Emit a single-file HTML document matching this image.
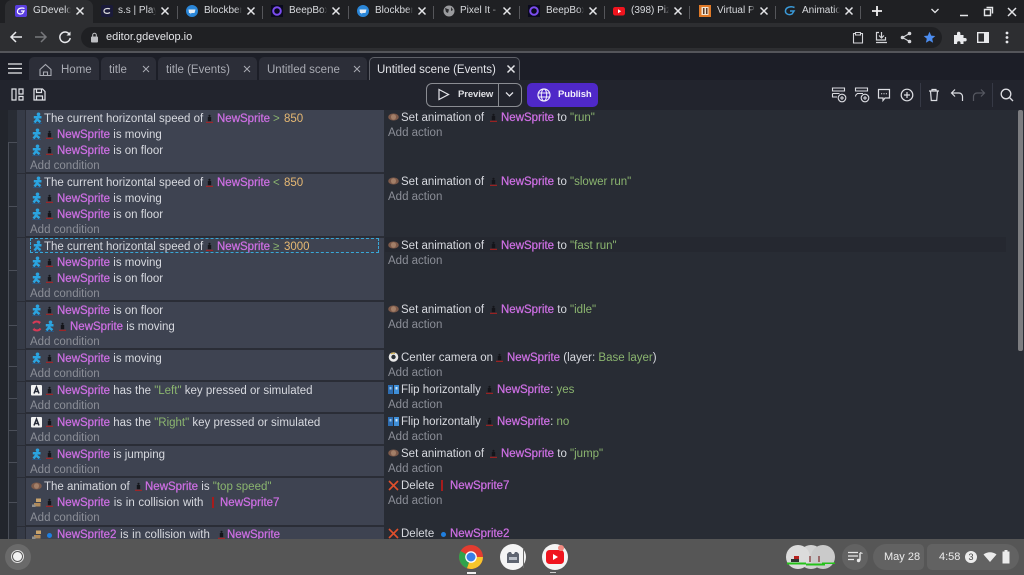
<!DOCTYPE html>
<html><head><meta charset="utf-8"><title>GDevelop</title>
<style>
html,body{margin:0;padding:0;width:1024px;height:575px;overflow:hidden;background:#282c34;font-family:"Liberation Sans",sans-serif}
div,svg{position:absolute}
.t{white-space:nowrap;font-size:11.5px;line-height:16px;color:#d7d9df;transform:translateY(1px)}
.n{color:#cd6fe3;-webkit-text-stroke:.25px #cd6fe3}
.g{color:#8bb56f}.o{color:#e6b873}
.a{color:#8b8e97}
.c{left:26px;width:358px;background:#3e4351}
.h{left:17px;width:8px;background:#363b47}
.tl{left:8px;width:9px;height:1px;background:#4a4e58}
.tab{top:0;height:22px;line-height:21px;font-size:10px;color:#d8dade;width:38px;overflow:hidden;white-space:nowrap;-webkit-mask-image:linear-gradient(90deg,#000 85%,transparent)}
.x{top:6px;width:10px;height:10px}
.sp{top:6px;width:1px;height:13px;background:#55565a}
.fv{top:5px;width:12px;height:12px}
.ap{top:57px;height:23px;background:#2c2e38;border-radius:5px 5px 0 0;line-height:26px;font-size:11.5px;color:#a9abb3;white-space:nowrap}
.ap span{position:absolute}
.i{width:11px;height:12px}
</style></head><body>
<svg width="0" height="0" style="left:0;top:0"><defs>
<g id="x"><path d="M1.500 1.500l7 7M8.500 1.500l-7 7" stroke="#e4e5e8" stroke-width="1.500" fill="none"/></g>
<g id="xa"><path d="M2 2l6 6M8 2l-6 6" stroke="#a9abb3" stroke-width="1" fill="none"/></g>
<g id="r"><circle cx="6.500" cy="2.300" r="1.800" fill="#2ba4e0"/><path d="M1.800 5.300h7.700M6 4.500L5 7.300l3.500 2.800M5 7.300L2.500 10.500" stroke="#2ba4e0" stroke-width="2.500" fill="none"/><path d="M1 11.500h9" stroke="#1d5fa0" stroke-width=".6"/></g>
<g id="s"><circle cx="5.500" cy="3.800" r="1.100" fill="#14151a"/><path d="M3.800 5h3.400v4.200H3.800z" fill="#14151a"/><path d="M2 10.300h7" stroke="#b5201e" stroke-width="1"/></g>
<g id="b"><ellipse cx="5.500" cy="6" rx="5.300" ry="3.500" fill="#7d5a4a"/><ellipse cx="5.500" cy="6" rx="2.500" ry="2.800" fill="#a37f68"/></g>
<g id="k"><rect x="0" y="1" width="11" height="10.500" rx="1" fill="#f2f2f2"/><path d="M3 9.500L5.500 3 8 9.500M3.800 7.500h3.400" stroke="#262a38" stroke-width="1.500" fill="none"/></g>
<g id="f"><rect x="0" y="2" width="5" height="9" fill="#2d6cb0"/><rect x="6" y="2" width="5" height="9" fill="#3f8fd8"/><rect x="1.500" y="4" width="2" height="2.500" fill="#8fc4ee"/><rect x="7.500" y="4" width="2" height="2.500" fill="#cde4f7"/></g>
<g id="cm"><path d="M3 7h6.500v3.500H3z" fill="#b08a5a"/><path d="M1 8.500h3.500V11H1z" fill="#8f8f8f"/><path d="M5 2.500h5V6H5z" fill="#c9a36c"/></g>
<g id="d"><path d="M1 2l9 9M10 2l-9 9" stroke="#e0502c" stroke-width="1.600" fill="none"/></g>
</defs></svg>

<!-- browser tab strip -->
<div style="left:0;top:0;width:1024px;height:23px;background:#1f2023"></div>
<div style="left:5px;top:0;width:88px;height:23px;background:#2d2e31;border-radius:7px 7px 0 0"></div>
<svg class="fv" style="left:15px" viewBox="0 0 12 12"><rect width="12" height="12" rx="2" fill="#5a3ee0"/><path d="M9.500 3.500C7 2.500 3 3 2.500 6s3 3.500 5 2.500L9 6H6" stroke="#fff" stroke-width="1.200" fill="none"/></svg>
<div class="tab" style="left:33px">GDevelop 5</div><svg class="x" style="left:75px" viewBox="0 0 10 10"><use href="#x"/></svg>
<svg class="fv" style="left:101px" viewBox="0 0 12 12"><rect width="12" height="12" rx="2" fill="#1a1a3a"/><path d="M9 4C7 3 3 3.500 3 6s4 3 6 1.500" stroke="#ddd" stroke-width="1.200" fill="none"/></svg>
<div class="tab" style="left:118px">s.s | Play this</div><svg class="x" style="left:160px" viewBox="0 0 10 10"><use href="#x"/></svg><div class="sp" style="left:177px"></div>
<svg class="fv" style="left:186px" viewBox="0 0 12 12"><circle cx="6" cy="6" r="6" fill="#2a86d8"/><path d="M2.500 4.500h7l-1 3.500h-3l-1 1.500V8H3z" fill="#e8eef5"/></svg>
<div class="tab" style="left:204px">Blockbench</div><svg class="x" style="left:246px" viewBox="0 0 10 10"><use href="#x"/></svg><div class="sp" style="left:262px"></div>
<svg class="fv" style="left:271px" viewBox="0 0 12 12"><rect width="12" height="12" fill="#0a0a1e"/><circle cx="6" cy="6" r="3.800" stroke="#7b4cf0" stroke-width="2" fill="none"/></svg>
<div class="tab" style="left:289px">BeepBox</div><svg class="x" style="left:331px" viewBox="0 0 10 10"><use href="#x"/></svg><div class="sp" style="left:348px"></div>
<svg class="fv" style="left:357px" viewBox="0 0 12 12"><circle cx="6" cy="6" r="6" fill="#2a86d8"/><path d="M2.500 4.500h7l-1 3.500h-3l-1 1.500V8H3z" fill="#e8eef5"/></svg>
<div class="tab" style="left:375px">Blockbench</div><svg class="x" style="left:417px" viewBox="0 0 10 10"><use href="#x"/></svg><div class="sp" style="left:433px"></div>
<svg class="fv" style="left:443px" viewBox="0 0 12 12"><circle cx="6" cy="6" r="5.500" fill="#9a9b9e"/><path d="M2 3l4 1.500L5 8 3 7zM8 2l2 3-2 1z" fill="#2d2e31"/></svg>
<div class="tab" style="left:460px">Pixel It - Online</div><svg class="x" style="left:502px" viewBox="0 0 10 10"><use href="#x"/></svg><div class="sp" style="left:519px"></div>
<svg class="fv" style="left:528px" viewBox="0 0 12 12"><rect width="12" height="12" fill="#0a0a1e"/><circle cx="6" cy="6" r="3.800" stroke="#7b4cf0" stroke-width="2" fill="none"/></svg>
<div class="tab" style="left:546px">BeepBox</div><svg class="x" style="left:588px" viewBox="0 0 10 10"><use href="#x"/></svg><div class="sp" style="left:604px"></div>
<svg class="fv" style="left:613px" viewBox="0 0 12 12"><rect y="2" width="12" height="8.500" rx="2.200" fill="#f0141e"/><path d="M5 4.300v4l3.200-2z" fill="#fff"/></svg>
<div class="tab" style="left:631px">(398) Pizza Tower</div><svg class="x" style="left:673px" viewBox="0 0 10 10"><use href="#x"/></svg><div class="sp" style="left:689px"></div>
<svg class="fv" style="left:699px" viewBox="0 0 12 12"><rect width="12" height="12" fill="#e07a28"/><rect x="2.500" y="2" width="7" height="8" fill="#f1e6d5"/><rect x="4" y="3" width="1.500" height="6" fill="#5a3a28"/><rect x="7" y="3" width="1.500" height="6" fill="#5a3a28"/></svg>
<div class="tab" style="left:717px">Virtual Piano</div><svg class="x" style="left:759px" viewBox="0 0 10 10"><use href="#x"/></svg><div class="sp" style="left:775px"></div>
<svg class="fv" style="left:784px" viewBox="0 0 12 12"><path d="M10.500 2.500C7 1 2 2 1.500 5.500S5 10.500 8 9l2-3H6" stroke="#3a9ad9" stroke-width="1.500" fill="none"/></svg>
<div class="tab" style="left:802px">Animation</div><svg class="x" style="left:844px" viewBox="0 0 10 10"><use href="#x"/></svg><div class="sp" style="left:860px"></div>
<svg style="left:871px;top:5px" width="12" height="12" viewBox="0 0 12 12"><path d="M6 1v10M1 6h10" stroke="#f0f0f2" stroke-width="1.800"/></svg>
<svg style="left:930px;top:7px" width="10" height="8" viewBox="0 0 10 8"><path d="M1.500 2L5 5.500 8.500 2" stroke="#e4e5e8" stroke-width="1.300" fill="none"/></svg>
<svg style="left:958px;top:6px" width="12" height="12" viewBox="0 0 12 12"><path d="M2 9.500h8" stroke="#e4e5e8" stroke-width="1.500"/></svg>
<svg style="left:983px;top:6px" width="11" height="11" viewBox="0 0 11 11"><path d="M3.500 1.500h6v6M1.500 3.500h6v6h-6z" stroke="#e4e5e8" stroke-width="1.400" fill="none"/></svg>
<svg style="left:1007px;top:7px" width="10" height="10" viewBox="0 0 10 10"><path d="M1 1l8 8M9 1l-8 8" stroke="#e4e5e8" stroke-width="1.500"/></svg>

<!-- omnibox row -->
<div style="left:0;top:23px;width:1024px;height:28px;background:#2d2e31"></div>
<div style="left:0;top:51px;width:1024px;height:2px;background:#54555a"></div>
<svg style="left:9px;top:30px" width="14" height="14" viewBox="0 0 14 14"><path d="M13 7H2M7 2L2 7l5 5" stroke="#e8e9ec" stroke-width="1.500" fill="none"/></svg>
<svg style="left:34px;top:30px" width="14" height="14" viewBox="0 0 14 14"><path d="M1 7h11M7 2l5 5-5 5" stroke="#77787c" stroke-width="1.500" fill="none"/></svg>
<svg style="left:58px;top:30px" width="14" height="14" viewBox="0 0 14 14"><path d="M11.500 4.500A5.200 5.200 0 1 0 12.200 8" stroke="#e8e9ec" stroke-width="1.500" fill="none"/><path d="M12.500 1.500v4h-4z" fill="#e8e9ec"/></svg>
<div style="left:81px;top:27px;width:861px;height:21px;border-radius:11px;background:#1f2023"></div>
<svg style="left:90px;top:32px" width="9" height="11" viewBox="0 0 9 11"><rect x="1" y="4.500" width="7" height="6" rx="1" fill="#bdbec2"/><path d="M2.700 4.500V3a1.800 1.800 0 0 1 3.600 0v1.500" stroke="#bdbec2" fill="none"/></svg>
<div class="t" style="left:106px;top:28px;font-size:11px;color:#e4e5e8">editor.gdevelop.io</div>
<svg style="left:852px;top:31px" width="12" height="13" viewBox="0 0 12 13"><path d="M3.500 2.500H1.500v9.500h9V2.500h-2M3.500 1.500h5v2.500h-5z" stroke="#d4d5d9" stroke-width="1.100" fill="none"/></svg>
<svg style="left:875px;top:31px" width="13" height="13" viewBox="0 0 13 13"><path d="M4 1.500H1.500V9h9V6M6.500 1v5.500M4 4.500l2.500 2.500L9 4.500M1 11.500h11" stroke="#d4d5d9" stroke-width="1.200" fill="none"/></svg>
<svg style="left:900px;top:31px" width="12" height="13" viewBox="0 0 12 13"><path d="M9.500 2.500l-7 4 7 4" stroke="#d4d5d9" stroke-width="1.100" fill="none"/><circle cx="9.500" cy="2.500" r="1.800" fill="#d4d5d9"/><circle cx="2.500" cy="6.500" r="1.800" fill="#d4d5d9"/><circle cx="9.500" cy="10.500" r="1.800" fill="#d4d5d9"/></svg>
<svg style="left:923px;top:31px" width="13" height="13" viewBox="0 0 13 13"><path d="M6.500.8l1.700 3.800 4.100.4-3.100 2.700.9 4-3.600-2.100-3.600 2.100.9-4L.7 5l4.100-.4z" fill="#4c8df0"/></svg>
<svg style="left:953px;top:31px" width="14" height="13" viewBox="0 0 14 13"><path d="M1 4h3V2.500a1.700 1.700 0 0 1 3.400 0V4h3.100v3H12a1.700 1.700 0 0 1 0 3.400h-1.500V13H7.500v-1a1.700 1.700 0 0 0-3.400 0v1H1z" fill="#e8e9ec"/></svg>
<svg style="left:977px;top:32px" width="12" height="11" viewBox="0 0 12 11"><rect x="0.700" y="0.700" width="10.600" height="9.600" fill="none" stroke="#e8e9ec" stroke-width="1.400"/><rect x="7" y="1" width="4" height="9" fill="#e8e9ec"/></svg>
<svg style="left:1005px;top:31px" width="4" height="13" viewBox="0 0 4 13"><circle cx="2" cy="2" r="1.400" fill="#e8e9ec"/><circle cx="2" cy="6.500" r="1.400" fill="#e8e9ec"/><circle cx="2" cy="11" r="1.400" fill="#e8e9ec"/></svg>

<!-- app tab bar -->
<div style="left:0;top:53px;width:1024px;height:27px;background:#1c1e27"></div>
<svg style="left:8px;top:63px" width="14" height="11" viewBox="0 0 14 11"><path d="M0 1h14M0 5.500h14M0 10h14" stroke="#e8e9ec" stroke-width="1.300"/></svg>
<div class="ap" style="left:29px;width:70px"><span style="left:32px;top:0">Home</span></div>
<svg style="left:39px;top:63px" width="13" height="14" viewBox="0 0 13 14"><path d="M1 6.500L6.500 1.500 12 6.500V12.500H1zM4.500 12.500V9h4v3.500" stroke="#a9abb3" stroke-width="1.100" fill="none"/></svg>
<div class="ap" style="left:101px;width:55px"><span style="left:8px;top:0">title</span><svg class="x" style="left:40px;top:7px" viewBox="0 0 10 10"><use href="#xa"/></svg></div>
<div class="ap" style="left:158px;width:99px"><span style="left:8px;top:0">title (Events)</span><svg class="x" style="left:84px;top:7px" viewBox="0 0 10 10"><use href="#xa"/></svg></div>
<div class="ap" style="left:259px;width:108px"><span style="left:8px;top:0">Untitled scene</span><svg class="x" style="left:93px;top:7px" viewBox="0 0 10 10"><use href="#xa"/></svg></div>
<div class="ap" style="left:369px;width:151px;box-sizing:border-box;border:1px solid #5e6068;border-bottom:0;background:#22242d;color:#e2e3e8"><span style="left:7px;top:-1px">Untitled scene (Events)</span><svg class="x" style="left:136px;top:6px" viewBox="0 0 10 10"><use href="#x"/></svg></div>

<!-- toolbar -->
<div style="left:0;top:80px;width:1024px;height:30px;background:#22242d"></div>
<svg style="left:11px;top:88px" width="13" height="13" viewBox="0 0 13 13"><path d="M1 1h4v11H1zM8 1h4v5H8zM8 8.500h4V12H8z" stroke="#e2e3e8" stroke-width="1.200" fill="none"/></svg>
<svg style="left:33px;top:88px" width="13" height="13" viewBox="0 0 13 13"><path d="M1 1h8.500L12 3.500V12H1zM3.500 1v3.500h5V1M3.500 12V8h6v4" stroke="#e2e3e8" stroke-width="1.200" fill="none"/></svg>
<div style="left:426px;top:83px;width:96px;height:24px;box-sizing:border-box;border:1px solid #8a8c92;border-radius:6px"></div>
<div style="left:498px;top:83px;width:1px;height:24px;background:#8a8c92"></div>
<svg style="left:437px;top:88px" width="13" height="13" viewBox="0 0 13 13"><path d="M2 1.500L11.500 6.500 2 11.500z" stroke="#e2e3e8" stroke-width="1.200" fill="none"/></svg>
<div class="t" style="left:458px;top:86px;font-size:9.500px;font-weight:bold;color:#dfe0e4;letter-spacing:-.1px">Preview</div>
<svg style="left:505px;top:91px" width="9" height="7" viewBox="0 0 9 7"><path d="M1 1.500l3.500 3.500L8 1.500" stroke="#e2e3e8" stroke-width="1.300" fill="none"/></svg>
<div style="left:527px;top:83px;width:71px;height:24px;background:#4f28c8;border-radius:5px"></div>
<svg style="left:537px;top:88px" width="14" height="14" viewBox="0 0 14 14"><circle cx="7" cy="7" r="6" stroke="#f2f0fb" stroke-width="1.200" fill="none"/><ellipse cx="7" cy="7" rx="2.700" ry="6" stroke="#f2f0fb" fill="none"/><path d="M1 5h12M1 9h12" stroke="#f2f0fb"/></svg>
<div class="t" style="left:558px;top:86px;font-size:9.500px;font-weight:bold;color:#f2f0fb;letter-spacing:-.1px">Publish</div>
<svg style="left:831px;top:87px" width="16" height="16" viewBox="0 0 16 16"><path d="M1.500 1h12v3h-12zM1.500 6.500h7M1.500 6.500v3.500h4.500" stroke="#dcdde2" stroke-width="1.100" fill="none"/><circle cx="11" cy="11" r="3.800" stroke="#dcdde2" stroke-width="1.100" fill="none"/><path d="M9 11h4M11 9v4" stroke="#dcdde2"/></svg>
<svg style="left:854px;top:87px" width="16" height="16" viewBox="0 0 16 16"><path d="M1.500 1h12v3h-12zM3 6.500h6M1.500 9.500a3 3 0 0 1 3-3" stroke="#dcdde2" stroke-width="1.100" fill="none"/><circle cx="11" cy="11" r="3.800" stroke="#dcdde2" stroke-width="1.100" fill="none"/><path d="M9 11h4M11 9v4" stroke="#dcdde2"/></svg>
<svg style="left:877px;top:88px" width="14" height="14" viewBox="0 0 14 14"><path d="M1.500 1.500h11v8.500H8L6 12.500V10H1.500z" stroke="#dcdde2" stroke-width="1.200" fill="none"/><path d="M4 5.800h1.200M6.400 5.800h1.200M8.800 5.800H10" stroke="#dcdde2"/></svg>
<svg style="left:900px;top:88px" width="14" height="14" viewBox="0 0 14 14"><circle cx="7" cy="7" r="5.800" stroke="#dcdde2" stroke-width="1.200" fill="none"/><path d="M4 7h6M7 4v6" stroke="#dcdde2" stroke-width="1.200"/></svg>
<div style="left:920px;top:83px;width:1px;height:24px;background:#363945"></div>
<svg style="left:928px;top:88px" width="12" height="14" viewBox="0 0 12 14"><path d="M1 3h10M4 3V1.500h4V3M2.500 3l.8 9.500h5.400L9.500 3" stroke="#dcdde2" stroke-width="1.200" fill="none"/></svg>
<svg style="left:950px;top:88px" width="14" height="14" viewBox="0 0 14 14"><path d="M5 1.500L1.500 5 5 8.500M1.500 5H9a3.500 3.500 0 0 1 3.500 3.500V13" stroke="#dcdde2" stroke-width="1.200" fill="none"/></svg>
<svg style="left:972px;top:88px" width="14" height="14" viewBox="0 0 14 14"><path d="M9 1.500L12.500 5 9 8.500M12.500 5H5A3.500 3.500 0 0 0 1.500 8.500V13" stroke="#565861" stroke-width="1.200" fill="none"/></svg>
<div style="left:992px;top:83px;width:1px;height:24px;background:#363945"></div>
<svg style="left:1000px;top:88px" width="14" height="14" viewBox="0 0 14 14"><circle cx="6" cy="6" r="4.800" stroke="#dcdde2" stroke-width="1.300" fill="none"/><path d="M9.500 9.500L13 13" stroke="#dcdde2" stroke-width="1.300"/></svg>

<!-- event sheet left gutter -->
<div style="left:0;top:110px;width:8px;height:429px;background:#22252c"></div>
<div style="left:8px;top:110px;width:9px;height:429px;background:#282c34"></div>
<div style="left:8px;top:142px;width:1px;height:397px;background:#4a4e58"></div>
<div class="tl" style="top:142px"></div><div class="tl" style="top:206px"></div><div class="tl" style="top:270px"></div><div class="tl" style="top:325px"></div><div class="tl" style="top:366px"></div><div class="tl" style="top:398px"></div><div class="tl" style="top:430px"></div><div class="tl" style="top:462px"></div><div class="tl" style="top:502px"></div>

<!-- row backgrounds -->
<div style="left:17px;top:110px;width:367px;height:429px;background:#2a2d36"></div>
<div class="h" style="top:110px;height:63px"></div><div class="c" style="top:110px;height:62px"></div>
<div class="h" style="top:174px;height:63px"></div><div class="c" style="top:174px;height:62px"></div>
<div class="h" style="top:238px;height:63px"></div><div class="c" style="top:238px;height:62px"></div>
<div class="h" style="top:302px;height:47px"></div><div class="c" style="top:302px;height:46px"></div>
<div class="h" style="top:350px;height:31px"></div><div class="c" style="top:350px;height:30px"></div>
<div class="h" style="top:382px;height:31px"></div><div class="c" style="top:382px;height:30px"></div>
<div class="h" style="top:414px;height:31px"></div><div class="c" style="top:414px;height:30px"></div>
<div class="h" style="top:446px;height:31px"></div><div class="c" style="top:446px;height:30px"></div>
<div class="h" style="top:478px;height:48px"></div><div class="c" style="top:478px;height:47px"></div>
<div class="h" style="top:527px;height:12px"></div><div class="c" style="top:527px;height:12px"></div>
<div style="left:385px;top:237px;width:621px;height:15px;background:#252830"></div>
<div style="left:30px;top:238px;width:349px;height:15px;box-sizing:border-box;border:1px dashed #38a8d8"></div>
<div style="left:1018px;top:110px;width:5px;height:241px;background:#7c7d80;border-radius:2px"></div>

<!-- row 1 -->
<svg class="i" style="left:32px;top:112px" viewBox="0 0 11 12"><use href="#r"/></svg>
<div class="t" style="left:44px;top:110px">The current horizontal speed of</div>
<svg class="i" style="left:204px;top:112px" viewBox="0 0 11 12"><use href="#s"/></svg>
<div class="t n" style="left:217px;top:110px">NewSprite</div><div class="t g" style="left:273px;top:110px">&gt;</div><div class="t o" style="left:284px;top:110px">850</div>
<svg class="i" style="left:31px;top:128px" viewBox="0 0 11 12"><use href="#r"/></svg><svg class="i" style="left:44px;top:128px" viewBox="0 0 11 12"><use href="#s"/></svg>
<div class="t" style="left:57px;top:126px"><span class="n">NewSprite</span> is moving</div>
<svg class="i" style="left:31px;top:144px" viewBox="0 0 11 12"><use href="#r"/></svg><svg class="i" style="left:44px;top:144px" viewBox="0 0 11 12"><use href="#s"/></svg>
<div class="t" style="left:57px;top:142px"><span class="n">NewSprite</span> is on floor</div>
<div class="t a" style="left:30px;top:157px">Add condition</div>
<!-- row 2 -->
<svg class="i" style="left:32px;top:176px" viewBox="0 0 11 12"><use href="#r"/></svg>
<div class="t" style="left:44px;top:174px">The current horizontal speed of</div>
<svg class="i" style="left:204px;top:176px" viewBox="0 0 11 12"><use href="#s"/></svg>
<div class="t n" style="left:217px;top:174px">NewSprite</div><div class="t g" style="left:273px;top:174px">&lt;</div><div class="t o" style="left:284px;top:174px">850</div>
<svg class="i" style="left:31px;top:192px" viewBox="0 0 11 12"><use href="#r"/></svg><svg class="i" style="left:44px;top:192px" viewBox="0 0 11 12"><use href="#s"/></svg>
<div class="t" style="left:57px;top:190px"><span class="n">NewSprite</span> is moving</div>
<svg class="i" style="left:31px;top:208px" viewBox="0 0 11 12"><use href="#r"/></svg><svg class="i" style="left:44px;top:208px" viewBox="0 0 11 12"><use href="#s"/></svg>
<div class="t" style="left:57px;top:206px"><span class="n">NewSprite</span> is on floor</div>
<div class="t a" style="left:30px;top:221px">Add condition</div>
<!-- row 3 -->
<svg class="i" style="left:32px;top:240px" viewBox="0 0 11 12"><use href="#r"/></svg>
<div class="t" style="left:44px;top:238px">The current horizontal speed of</div>
<svg class="i" style="left:204px;top:240px" viewBox="0 0 11 12"><use href="#s"/></svg>
<div class="t n" style="left:217px;top:238px">NewSprite</div><div class="t g" style="left:273px;top:238px">≥</div><div class="t o" style="left:284px;top:238px">3000</div>
<svg class="i" style="left:31px;top:256px" viewBox="0 0 11 12"><use href="#r"/></svg><svg class="i" style="left:44px;top:256px" viewBox="0 0 11 12"><use href="#s"/></svg>
<div class="t" style="left:57px;top:254px"><span class="n">NewSprite</span> is moving</div>
<svg class="i" style="left:31px;top:272px" viewBox="0 0 11 12"><use href="#r"/></svg><svg class="i" style="left:44px;top:272px" viewBox="0 0 11 12"><use href="#s"/></svg>
<div class="t" style="left:57px;top:270px"><span class="n">NewSprite</span> is on floor</div>
<div class="t a" style="left:30px;top:285px">Add condition</div>
<!-- row 4 -->
<svg class="i" style="left:31px;top:304px" viewBox="0 0 11 12"><use href="#r"/></svg><svg class="i" style="left:44px;top:304px" viewBox="0 0 11 12"><use href="#s"/></svg>
<div class="t" style="left:57px;top:302px"><span class="n">NewSprite</span> is on floor</div>
<svg style="left:31px;top:320px" width="11" height="12" viewBox="0 0 11 12"><path d="M2 3.500A4 4 0 0 1 8 2.500M9.500 8.500A4 4 0 0 1 3.500 9.500" stroke="#d63a56" stroke-width="2" fill="none"/><path d="M7 .5l3 1.500-2 2.500zM4.500 11.500l-3-1.500 2-2.500z" fill="#d63a56"/></svg>
<svg class="i" style="left:44px;top:320px" viewBox="0 0 11 12"><use href="#r"/></svg><svg class="i" style="left:57px;top:320px" viewBox="0 0 11 12"><use href="#s"/></svg>
<div class="t" style="left:70px;top:318px"><span class="n">NewSprite</span> is moving</div>
<div class="t a" style="left:30px;top:333px">Add condition</div>
<!-- row 5 -->
<svg class="i" style="left:31px;top:352px" viewBox="0 0 11 12"><use href="#r"/></svg><svg class="i" style="left:44px;top:352px" viewBox="0 0 11 12"><use href="#s"/></svg>
<div class="t" style="left:57px;top:350px"><span class="n">NewSprite</span> is moving</div>
<div class="t a" style="left:30px;top:365px">Add condition</div>
<!-- row 6 -->
<svg class="i" style="left:31px;top:384px" viewBox="0 0 11 12"><use href="#k"/></svg><svg class="i" style="left:44px;top:384px" viewBox="0 0 11 12"><use href="#s"/></svg>
<div class="t" style="left:57px;top:382px"><span class="n">NewSprite</span> has the <span class="g">"Left"</span> key pressed or simulated</div>
<div class="t a" style="left:30px;top:397px">Add condition</div>
<!-- row 7 -->
<svg class="i" style="left:31px;top:416px" viewBox="0 0 11 12"><use href="#k"/></svg><svg class="i" style="left:44px;top:416px" viewBox="0 0 11 12"><use href="#s"/></svg>
<div class="t" style="left:57px;top:414px"><span class="n">NewSprite</span> has the <span class="g">"Right"</span> key pressed or simulated</div>
<div class="t a" style="left:30px;top:429px">Add condition</div>
<!-- row 8 -->
<svg class="i" style="left:31px;top:448px" viewBox="0 0 11 12"><use href="#r"/></svg><svg class="i" style="left:44px;top:448px" viewBox="0 0 11 12"><use href="#s"/></svg>
<div class="t" style="left:57px;top:446px"><span class="n">NewSprite</span> is jumping</div>
<div class="t a" style="left:30px;top:461px">Add condition</div>
<!-- row 9 -->
<svg class="i" style="left:31px;top:480px" viewBox="0 0 11 12"><use href="#b"/></svg>
<div class="t" style="left:44px;top:478px">The animation of</div>
<svg class="i" style="left:133px;top:480px" viewBox="0 0 11 12"><use href="#s"/></svg>
<div class="t" style="left:145px;top:478px"><span class="n">NewSprite</span> is <span class="g">"top speed"</span></div>
<svg class="i" style="left:31px;top:496px" viewBox="0 0 11 12"><use href="#cm"/></svg><svg class="i" style="left:44px;top:496px" viewBox="0 0 11 12"><use href="#s"/></svg>
<div class="t" style="left:57px;top:494px;word-spacing:.5px"><span class="n">NewSprite</span> is in collision with</div>
<div style="left:212px;top:497px;width:2px;height:11px;background:#a51c1c"></div>
<div class="t n" style="left:220px;top:494px">NewSprite7</div>
<div class="t a" style="left:30px;top:509px">Add condition</div>
<!-- row 10 -->
<svg class="i" style="left:31px;top:528px" viewBox="0 0 11 12"><use href="#cm"/></svg>
<div style="left:47px;top:533px;width:5px;height:5px;border-radius:50%;background:#1f7fe0"></div>
<div class="t" style="left:57px;top:526px;word-spacing:.5px"><span class="n">NewSprite2</span> is in collision with</div>
<svg class="i" style="left:216px;top:528px" viewBox="0 0 11 12"><use href="#s"/></svg>
<div class="t n" style="left:227px;top:526px">NewSprite</div>

<!-- actions -->
<svg class="i" style="left:388px;top:111px" viewBox="0 0 11 12"><use href="#b"/></svg>
<div class="t" style="left:401px;top:109px">Set animation of</div><svg class="i" style="left:488px;top:111px" viewBox="0 0 11 12"><use href="#s"/></svg>
<div class="t" style="left:501px;top:109px"><span class="n">NewSprite</span> to <span class="g">"run"</span></div>
<div class="t a" style="left:388px;top:124px">Add action</div>
<svg class="i" style="left:388px;top:175px" viewBox="0 0 11 12"><use href="#b"/></svg>
<div class="t" style="left:401px;top:173px">Set animation of</div><svg class="i" style="left:488px;top:175px" viewBox="0 0 11 12"><use href="#s"/></svg>
<div class="t" style="left:501px;top:173px"><span class="n">NewSprite</span> to <span class="g">"slower run"</span></div>
<div class="t a" style="left:388px;top:188px">Add action</div>
<svg class="i" style="left:388px;top:239px" viewBox="0 0 11 12"><use href="#b"/></svg>
<div class="t" style="left:401px;top:237px">Set animation of</div><svg class="i" style="left:488px;top:239px" viewBox="0 0 11 12"><use href="#s"/></svg>
<div class="t" style="left:501px;top:237px"><span class="n">NewSprite</span> to <span class="g">"fast run"</span></div>
<div class="t a" style="left:388px;top:252px">Add action</div>
<svg class="i" style="left:388px;top:303px" viewBox="0 0 11 12"><use href="#b"/></svg>
<div class="t" style="left:401px;top:301px">Set animation of</div><svg class="i" style="left:488px;top:303px" viewBox="0 0 11 12"><use href="#s"/></svg>
<div class="t" style="left:501px;top:301px"><span class="n">NewSprite</span> to <span class="g">"idle"</span></div>
<div class="t a" style="left:388px;top:316px">Add action</div>
<svg style="left:388px;top:351px" width="11" height="12" viewBox="0 0 11 12"><circle cx="5.500" cy="6" r="4.800" fill="#e8e8e8"/><circle cx="5.500" cy="6" r="2.200" fill="#2a3036"/><path d="M3 3a3.500 3.500 0 0 1 4 -.5" stroke="#c8a030" fill="none"/></svg>
<div class="t" style="left:401px;top:349px">Center camera on</div><svg class="i" style="left:494px;top:351px" viewBox="0 0 11 12"><use href="#s"/></svg>
<div class="t" style="left:507px;top:349px"><span class="n">NewSprite</span> (layer: <span class="g">Base layer</span>)</div>
<div class="t a" style="left:388px;top:364px">Add action</div>
<svg class="i" style="left:388px;top:383px" viewBox="0 0 11 12"><use href="#f"/></svg>
<div class="t" style="left:401px;top:381px">Flip horizontally</div><svg class="i" style="left:484px;top:383px" viewBox="0 0 11 12"><use href="#s"/></svg>
<div class="t" style="left:497px;top:381px"><span class="n">NewSprite</span>: <span class="g">yes</span></div>
<div class="t a" style="left:388px;top:396px">Add action</div>
<svg class="i" style="left:388px;top:415px" viewBox="0 0 11 12"><use href="#f"/></svg>
<div class="t" style="left:401px;top:413px">Flip horizontally</div><svg class="i" style="left:484px;top:415px" viewBox="0 0 11 12"><use href="#s"/></svg>
<div class="t" style="left:497px;top:413px"><span class="n">NewSprite</span>: <span class="g">no</span></div>
<div class="t a" style="left:388px;top:428px">Add action</div>
<svg class="i" style="left:388px;top:447px" viewBox="0 0 11 12"><use href="#b"/></svg>
<div class="t" style="left:401px;top:445px">Set animation of</div><svg class="i" style="left:488px;top:447px" viewBox="0 0 11 12"><use href="#s"/></svg>
<div class="t" style="left:501px;top:445px"><span class="n">NewSprite</span> to <span class="g">"jump"</span></div>
<div class="t a" style="left:388px;top:460px">Add action</div>
<svg class="i" style="left:388px;top:479px" viewBox="0 0 11 12"><use href="#d"/></svg>
<div class="t" style="left:401px;top:477px">Delete</div>
<div style="left:441px;top:480px;width:2px;height:11px;background:#a51c1c"></div>
<div class="t n" style="left:450px;top:477px">NewSprite7</div>
<div class="t a" style="left:388px;top:492px">Add action</div>
<svg class="i" style="left:388px;top:527px" viewBox="0 0 11 12"><use href="#d"/></svg>
<div class="t" style="left:401px;top:525px">Delete</div>
<div style="left:441px;top:532px;width:5px;height:5px;border-radius:50%;background:#1f7fe0"></div>
<div class="t n" style="left:450px;top:525px">NewSprite2</div>

<!-- chromeos shelf -->
<div style="left:0;top:539px;width:1024px;height:36px;background:#565656"></div>
<div style="left:5px;top:544px;width:26px;height:26px;border-radius:50%;background:#6a6a6a"></div>
<div style="left:12px;top:551px;width:9px;height:9px;border-radius:50%;background:#f2f2f2;border:1.500px solid #565656;outline:1px solid #e4e4e4"></div>
<svg style="left:458px;top:544px" width="26" height="26" viewBox="0 0 26 26"><circle cx="13" cy="13" r="12" fill="#e23c30"/><path d="M13 13L2.600 7A12 12 0 0 0 9 24.300z" fill="#2fa24c"/><path d="M13 13L9 24.300A12 12 0 0 0 25 13z" fill="#f7c52c"/><circle cx="13" cy="13" r="5.800" fill="#fff"/><circle cx="13" cy="13" r="4.500" fill="#3a7fe6"/></svg>
<div style="left:467px;top:572px;width:9px;height:2px;background:#eee"></div>
<div style="left:500px;top:544px;width:26px;height:26px;border-radius:50%;background:#f4f4f4"></div>
<svg style="left:505px;top:551px" width="16" height="13" viewBox="0 0 16 13"><path d="M2 3l2-2h2l1 2h2l1-2h2l2 2v9H2z" fill="#5e6470"/><rect x="4" y="6" width="8" height="3" fill="#b9bec6"/></svg>
<div style="left:523px;top:548px;width:1px;height:20px;background:#6c6c6c"></div>
<div style="left:542px;top:544px;width:26px;height:26px;border-radius:50%;background:#f4f4f4"></div>
<svg style="left:546px;top:549px" width="18" height="16" viewBox="0 0 18 16"><rect y="1" width="18" height="14" rx="3.500" fill="#f0141e"/><path d="M7 5v6l5-3z" fill="#fff"/></svg>
<div style="left:558px;top:545px;width:6px;height:6px;border-radius:50%;background:#f28b82"></div>
<div style="left:550px;top:572px;width:6px;height:1px;background:#ccc"></div>
<div style="left:799px;top:545px;width:24px;height:24px;border-radius:50%;background:#d2d2d2"></div>
<div style="left:811px;top:545px;width:24px;height:24px;border-radius:50%;background:#cacaca"></div>
<div style="left:786px;top:545px;width:24px;height:24px;border-radius:50%;background:#dcdcdc"></div>
<svg style="left:786px;top:545px" width="50" height="24" viewBox="0 0 50 24"><path d="M1 17.500h19v2H1zM20 18.500h19v2H20zM36 17.500h13v1.500H36z" fill="#25c21a"/><path d="M5 14h8v3H5z" fill="#333"/><path d="M8 11h5v3H8z" fill="#b5201e"/><path d="M24 11v6M33 11v6" stroke="#7a2a2a" stroke-width="1.200"/></svg>
<div style="left:842px;top:544px;width:26px;height:26px;border-radius:50%;background:#626262"></div>
<svg style="left:848px;top:551px" width="15" height="12" viewBox="0 0 15 12"><path d="M0 1.500h10M0 5h10M0 8.500h6" stroke="#e8e8e8" stroke-width="1.300"/><path d="M12 2v7.500" stroke="#e8e8e8" stroke-width="1.400"/><circle cx="10.500" cy="9.500" r="1.700" fill="#e8e8e8"/><path d="M12 1.500l2.500 1" stroke="#e8e8e8" stroke-width="1.200"/></svg>
<div style="left:873px;top:544px;width:51px;height:26px;border-radius:13px 5px 5px 13px;background:#626262"></div>
<div class="t" style="left:884px;top:548px;font-size:11px;color:#ececec">May 28</div>
<div style="left:927px;top:544px;width:92px;height:26px;border-radius:5px 13px 13px 5px;background:#626262"></div>
<div class="t" style="left:939px;top:548px;font-size:11px;color:#ececec">4:58</div>
<div style="left:965px;top:551px;width:12px;height:12px;border-radius:50%;background:#ececec;color:#444;font-size:9px;line-height:12px;text-align:center">3</div>
<svg style="left:983px;top:551px" width="14" height="12" viewBox="0 0 14 12"><path d="M7 11L.5 3.500C4 .5 10 .5 13.500 3.500z" fill="#ececec"/></svg>
<svg style="left:1002px;top:550px" width="8" height="14" viewBox="0 0 8 14"><path d="M2.500 0h3v1.500H7.500V13.500H.5V1.500h2z" fill="#ececec"/></svg>
</body></html>
